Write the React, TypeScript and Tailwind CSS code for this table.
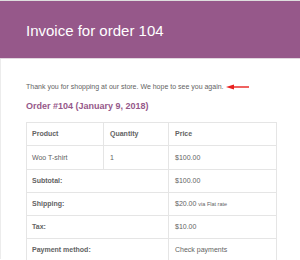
import React from "react";

const font = { fontFamily: '"Liberation Sans", Arial, sans-serif' };

function Row({
  cells,
  tall,
}: {
  cells: { text: React.ReactNode; bold?: boolean; span?: boolean }[];
  tall?: boolean;
}) {
  return (
    <div
      className={`grid grid-cols-[77px_65px_108px] border-b border-[#e5e5e5] ${tall ? "h-[24px]" : "h-[23px]"}`}
    >
      {cells.map((c, i) => (
        <div
          key={i}
          className={`flex items-center border-r border-[#e5e5e5] text-[7px] leading-[8px] text-[#636363] ${
            c.bold ? "font-bold" : ""
          } ${c.span ? "col-span-2 pl-[5px]" : i === 0 ? "pl-[5px]" : "pl-[6px]"}`}
        >
          {c.text}
        </div>
      ))}
    </div>
  );
}

export default function App() {
  return (
    <div className="w-[300px] h-[260px] overflow-hidden bg-white" style={font}>
      <div className="border-t border-[#dddddd]">
        <div className="h-[58px] bg-[#96588a] pl-[26px] pt-[21px] border-b border-[#e2d6df]">
          <div className="text-[15px] leading-[17px] text-white">Invoice for order 104</div>
        </div>
      </div>
      <div className="h-[200px] border-l border-[#ececec] pl-[25px] pt-[24px]">
        <div className="flex items-center">
          <p className="text-[7px] leading-[8px] text-[#636363]">
            Thank you for shopping at our store. We hope to see you again.
          </p>
          <svg width="24" height="6" viewBox="0 0 24 6" className="ml-[2px]">
            <path d="M7 3 H23" stroke="#e8201e" strokeWidth="1.4" />
            <path d="M0 3 L8 0.4 L8 5.6 Z" fill="#e8201e" />
          </svg>
        </div>
        <div className="mt-[10px] text-[9px] leading-[10px] font-bold text-[#96588a]">
          Order #104 (January 9, 2018)
        </div>
        <div className="mt-[11px] w-[251px] border-l border-t border-[#e5e5e5]">
          <Row
            cells={[
              { text: "Product", bold: true },
              { text: "Quantity", bold: true },
              { text: "Price", bold: true },
            ]}
          />
          <Row tall cells={[{ text: "Woo T-shirt" }, { text: "1" }, { text: "$100.00" }]} />
          <Row cells={[{ text: "Subtotal:", bold: true, span: true }, { text: "$100.00" }]} />
          <Row
            cells={[
              { text: "Shipping:", bold: true, span: true },
              {
                text: (
                  <span>
                    $20.00 <span className="text-[5.5px]">via Flat rate</span>
                  </span>
                ),
              },
            ]}
          />
          <Row cells={[{ text: "Tax:", bold: true, span: true }, { text: "$10.00" }]} />
          <Row
            cells={[{ text: "Payment method:", bold: true, span: true }, { text: "Check payments" }]}
          />
        </div>
      </div>
    </div>
  );
}
